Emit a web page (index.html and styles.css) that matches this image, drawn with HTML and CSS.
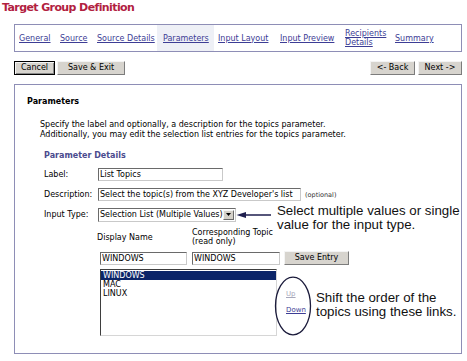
FILE: index.html
```html
<!DOCTYPE html>
<html>
<head>
<meta charset="utf-8">
<link rel="stylesheet" href="styles.css">
</head>
<body>
<h1 class="title">Target Group Definition</h1>
<nav class="tabs">
  <a class="tab tab-general" href="#">General</a>
  <a class="tab tab-source" href="#">Source</a>
  <a class="tab tab-details" href="#">Source Details</a>
  <a class="tab tab-params is-active" href="#">Parameters</a>
  <a class="tab tab-layout" href="#">Input Layout</a>
  <a class="tab tab-preview" href="#">Input Preview</a>
  <a class="tab tab-recip" href="#">Recipients<br>Details</a>
  <a class="tab tab-summary" href="#">Summary</a>
</nav>
<div class="actions">
  <div class="btn-group">
    <button class="btn btn-default btn-cancel">Cancel</button>
    <button class="btn btn-save">Save &amp; Exit</button>
  </div>
  <div class="btn-group gap3">
    <button class="btn btn-back">&lt;- Back</button>
    <button class="btn btn-next">Next -&gt;</button>
  </div>
</div>
<section class="panel">
  <h2 class="panel-title">Parameters</h2>
  <p class="intro">Specify the label and optionally, a description for the topics parameter.<br>Additionally, you may edit the selection list entries for the topics parameter.</p>
  <h3 class="sub-title">Parameter Details</h3>
  <div class="form">
    <label class="lbl">Label:</label>
    <div class="ctl"><input class="field field-label" value="List Topics"></div>
    <label class="lbl">Description:</label>
    <div class="ctl"><input class="field field-desc" value="Select the topic(s) from the XYZ Developer's list"><span class="optional">(optional)</span></div>
    <label class="lbl">Input Type:</label>
    <div class="ctl">
      <div class="select">
        <span class="select-value">Selection List (Multiple Values)</span>
        <span class="select-btn"><svg width="5" height="3" viewBox="0 0 5 3"><path d="M0 0H5L2.5 3Z" fill="#000"/></svg></span>
      </div>
    </div>
  </div>
  <div class="entry-head">
    <div class="col-a">Display Name</div>
    <div class="col-b">Corresponding Topic<br>(read only)</div>
  </div>
  <div class="entry-row">
    <input class="field field-entry" value="WINDOWS">
    <input class="field field-entry2" value="WINDOWS" readonly>
    <button class="btn btn-entry">Save Entry</button>
  </div>
  <div class="list-row">
    <div class="listbox">
      <div class="opt is-selected">WINDOWS</div>
      <div class="opt">MAC</div>
      <div class="opt">LINUX</div>
    </div>
    <div class="order-links">
      <a class="order up" href="#">Up</a>
      <a class="order down" href="#">Down</a>
    </div>
  </div>

  <svg class="note-arrow" width="36" height="8" viewBox="0 0 36 8">
    <path d="M0.5 4L10 1V7Z" fill="#1e1e4e"/>
    <path d="M9 4H35" stroke="#1e1e4e" stroke-width="1.5"/>
  </svg>
  <div class="note note-type">Select multiple values or single<br>value for the input type.</div>
  <svg class="note-oval" width="38" height="60" viewBox="0 0 38 60">
    <ellipse cx="19" cy="30" rx="17.5" ry="28.8" fill="none" stroke="#1c1c3c" stroke-width="1.3"/>
  </svg>
  <div class="note note-order">Shift the order of the<br>topics using these links.</div>
</section>
</body>
</html>
```

FILE: styles.css
```css
* { box-sizing: border-box; }

html, body { background: #fff; }

body {
  margin: 0;
  width: 467px;
  height: 361px;
  overflow: hidden;
  font-family: "DejaVu Sans", Verdana, sans-serif;
  font-size: 8px;
  color: #000;
}

.title {
  margin: 0;
  padding: 1px 0 0 2px;
  height: 15px;
  font-size: 11px;
  line-height: 14px;
  font-weight: bold;
  letter-spacing: -0.6px;
  color: #b2213f;
}

/* nav tabs */
.tabs {
  display: flex;
  margin: 9px 0 0 14px;
  width: 448px;
  height: 28px;
  border: 1px solid #8e8eb6;
}
.tab {
  display: flex;
  align-items: center;
  padding-left: 5px;
  color: #3d3d95;
  text-decoration: underline;
  line-height: 9px;
  white-space: nowrap;
}
.tab-general { width: 40px; padding-left: 4px; }
.tab-source { width: 36px; }
.tab-details { width: 66px; padding-left: 6px; }
.tab-params { width: 57px; padding-left: 6px; }
.tab-layout { width: 61px; padding-left: 4px; }
.tab-preview { width: 65px; }
.tab-recip { width: 50px; }
.tab-summary { flex: 1; }
.tab.is-active { background: #eef0f6; }

/* buttons */
.actions {
  display: flex;
  justify-content: space-between;
  margin: 9px 0 0 14px;
  width: 448px;
}
.btn-group { display: flex; gap: 2px; }
.btn-group.gap3 { gap: 3px; }
.btn {
  height: 14px;
  padding: 0;
  margin: 0;
  font-family: "DejaVu Sans", Verdana, sans-serif;
  font-size: 8px;
  line-height: 12px;
  color: #000;
  background: #d7d4ce;
  border: 1px solid;
  border-color: #f4f4f4 #7c7c7c #7c7c7c #f4f4f4;
}
.btn-default {
  border-color: #000;
  box-shadow: inset 1px 1px #f4f4f4, inset -1px -1px #8a8a8a;
}
.btn-cancel { width: 41px; }
.btn-save { width: 68px; }
.btn-back { width: 45px; }
.btn-next { width: 44px; }

/* panel */
.panel {
  position: relative;
  margin: 9px 0 0 14px;
  width: 448px;
  height: 270px;
  border: 1px solid #8e8eb6;
  padding: 12px 12px 0 12px;
}
.panel-title {
  margin: 0;
  font-size: 8px;
  line-height: 10px;
  font-weight: bold;
}
.intro {
  margin: 13px 0 0 13px;
  line-height: 10px;
}
.sub-title {
  margin: 11px 0 0 17px;
  font-size: 8px;
  line-height: 10px;
  font-weight: bold;
  color: #4b4b8e;
}

/* form */
.form {
  display: grid;
  grid-template-columns: 54px auto;
  row-gap: 7px;
  align-items: center;
  margin: 7px 0 0 17px;
}
.lbl { line-height: 13px; }
.ctl { display: flex; align-items: center; height: 13px; }
.field {
  height: 13px;
  margin: 0;
  padding: 0 1px;
  font-family: "DejaVu Sans", Verdana, sans-serif;
  font-size: 8px;
  color: #000;
  background: #fff;
  border: 1px solid;
  border-color: #6a6a6a #c9c9c9 #c9c9c9 #6a6a6a;
  outline: none;
}
.field-label { width: 125px; }
.field-desc { width: 203px; }
.optional {
  margin-left: 4px;
  font-size: 6.5px;
  color: #333;
}
.select {
  display: flex;
  align-items: center;
  width: 138px;
  height: 14px;
  border: 1px solid;
  border-color: #6a6a6a #c9c9c9 #c9c9c9 #6a6a6a;
  background: #fff;
}
.select-value { flex: 1; padding-left: 1px; white-space: nowrap; overflow: hidden; }
.select-btn {
  display: flex;
  align-items: center;
  justify-content: center;
  width: 11px;
  height: 10px;
  margin-right: 1px;
  background: #d4d0c8;
  border: 1px solid;
  border-color: #f4f4f4 #6a6a6a #6a6a6a #f4f4f4;
}

/* entries */
.entry-head {
  display: flex;
  align-items: center;
  margin: 7px 0 0 70px;
  line-height: 9px;
}
.col-a { width: 95px; }
.entry-row {
  display: flex;
  align-items: center;
  margin: 5px 0 0 73px;
}
.field-entry { width: 87px; }
.field-entry2 { width: 88px; margin-left: 5px; }
.btn-entry { width: 65px; margin-left: 4px; height: 14px; }

.list-row {
  display: flex;
  margin: 4px 0 0 73px;
}
.listbox {
  width: 177px;
  height: 67px;
  padding: 1px 0 0 0;
  border: 1px solid;
  border-color: #3e3e3e #d6d6d6 #d6d6d6 #3e3e3e;
  background: #fff;
}
.opt {
  height: 9px;
  padding-left: 2px;
  line-height: 9px;
}
.opt.is-selected { background: #0b2468; color: #fff; }
.order-links {
  display: flex;
  flex-direction: column;
  padding: 21px 0 0 9px;
  gap: 7px;
}
.order {
  font-size: 7px;
  line-height: 9px;
  text-decoration: underline;
}
.order.up { color: #a7a7bb; }
.order.down { color: #3d3d95; }

/* annotations */
.note {
  position: absolute;
  font-family: "Liberation Sans", Arial, sans-serif;
  font-size: 13.3px;
  line-height: 14px;
  color: #111;
  white-space: nowrap;
}
.note-type { left: 262px; top: 119px; }
.note-order { left: 301px; top: 206px; }
.note-arrow { position: absolute; left: 221px; top: 126px; }
.note-oval { position: absolute; left: 259px; top: 191px; }
```
